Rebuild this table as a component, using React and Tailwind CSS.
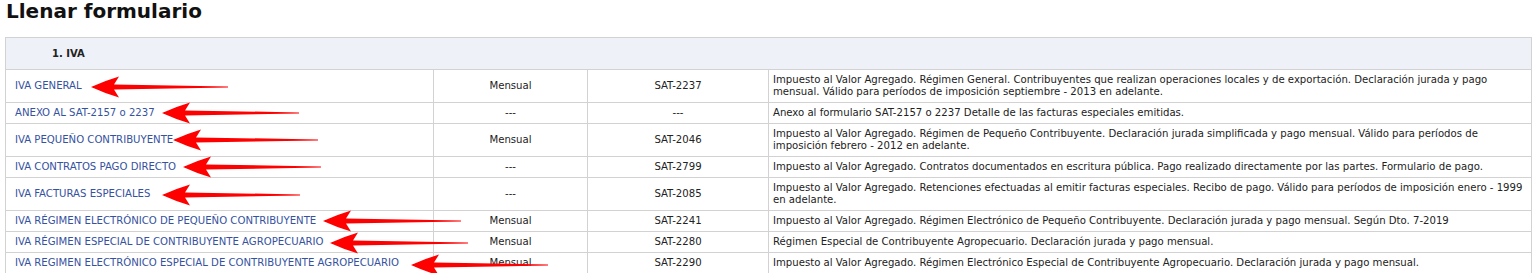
const ROWS = [
  {
    name: "IVA GENERAL",
    period: "Mensual",
    form: "SAT-2237",
    desc: "Impuesto al Valor Agregado. Régimen General. Contribuyentes que realizan operaciones locales y de exportación. Declaración jurada y pago\nmensual. Válido para períodos de imposición septiembre - 2013 en adelante.",
  },
  {
    name: "ANEXO AL SAT-2157 o 2237",
    period: "---",
    form: "---",
    desc: "Anexo al formulario SAT-2157 o 2237 Detalle de las facturas especiales emitidas.",
  },
  {
    name: "IVA PEQUEÑO CONTRIBUYENTE",
    period: "Mensual",
    form: "SAT-2046",
    desc: "Impuesto al Valor Agregado. Régimen de Pequeño Contribuyente. Declaración jurada simplificada y pago mensual. Válido para períodos de\nimposición febrero - 2012 en adelante.",
  },
  {
    name: "IVA CONTRATOS PAGO DIRECTO",
    period: "---",
    form: "SAT-2799",
    desc: "Impuesto al Valor Agregado. Contratos documentados en escritura pública. Pago realizado directamente por las partes. Formulario de pago.",
  },
  {
    name: "IVA FACTURAS ESPECIALES",
    period: "---",
    form: "SAT-2085",
    desc: "Impuesto al Valor Agregado. Retenciones efectuadas al emitir facturas especiales. Recibo de pago. Válido para períodos de imposición enero - 1999\nen adelante.",
  },
  {
    name: "IVA RÉGIMEN ELECTRÓNICO DE PEQUEÑO CONTRIBUYENTE",
    period: "Mensual",
    form: "SAT-2241",
    desc: "Impuesto al Valor Agregado. Régimen Electrónico de Pequeño Contribuyente. Declaración jurada y pago mensual. Según Dto. 7-2019",
  },
  {
    name: "IVA RÉGIMEN ESPECIAL DE CONTRIBUYENTE AGROPECUARIO",
    period: "Mensual",
    form: "SAT-2280",
    desc: "Régimen Especial de Contribuyente Agropecuario. Declaración jurada y pago mensual.",
  },
  {
    name: "IVA REGIMEN ELECTRÓNICO ESPECIAL DE CONTRIBUYENTE AGROPECUARIO",
    period: "Mensual",
    form: "SAT-2290",
    desc: "Impuesto al Valor Agregado. Régimen Electrónico Especial de Contribuyente Agropecuario. Declaración jurada y pago mensual.",
  },
];

// annotation arrows drawn over the screenshot: tip x / centre y / tail x
const ARROWS = [
  { tip: 91, y: 87, tail: 228, pos: "left-[91px] top-[76px]" },
  { tip: 162, y: 113, tail: 299, pos: "left-[162px] top-[102px]" },
  { tip: 173, y: 140, tail: 318, pos: "left-[173px] top-[129px]" },
  { tip: 183, y: 167, tail: 321, pos: "left-[183px] top-[156px]" },
  { tip: 162, y: 195, tail: 300, pos: "left-[162px] top-[184px]" },
  { tip: 323, y: 221, tail: 461, pos: "left-[323px] top-[210px]" },
  { tip: 330, y: 243, tail: 468, pos: "left-[330px] top-[232px]" },
  { tip: 411, y: 265, tail: 548, pos: "left-[411px] top-[254px]" },
];

function Arrow({ tip, tail, pos }) {
  const len = tail - tip;
  return (
    <svg
      className={`pointer-events-none absolute ${pos}`}
      width={len}
      height="22"
      viewBox={`0 0 ${len} 22`}
    >
      <path
        d={`M0 11 Q13 5 28 0.5 L23 8.4 L${len} 10.4 L${len} 11.4 L23 13.6 L28 21.5 Q13 17 0 11 Z`}
        fill="#ff0000"
      />
    </svg>
  );
}

export default function App() {
  return (
    <div className="relative h-[273px] w-[1536px] overflow-hidden bg-white">
      <h1 className="pl-[6px] font-['DejaVu_Sans',sans-serif] text-[20px] font-bold leading-[23px] text-[#111]">
        Llenar formulario
      </h1>

      <table className="ml-[5px] mt-[14px] w-[1527px] table-fixed border-collapse font-['DejaVu_Sans_Condensed','Liberation_Sans',sans-serif] text-[11.25px] leading-[12px] text-[#222]">
        <colgroup>
          <col className="w-[428px]" />
          <col className="w-[154px]" />
          <col className="w-[181px]" />
          <col />
        </colgroup>
        <thead>
          <tr className="bg-[#eef1f7]">
            <th
              colSpan={4}
              className="border border-[#d2d2d2] py-[9px] pl-[46px] text-left font-['DejaVu_Sans',sans-serif] text-[10px] leading-[13px] font-bold text-[#222]"
            >
              1. IVA
            </th>
          </tr>
        </thead>
        <tbody>
          {ROWS.map((r) => (
            <tr key={r.name}>
              <td className="border border-[#d2d2d2] py-1 pl-[9px] align-middle">
                <a href="#" className="text-[#3552a0]">
                  {r.name}
                </a>
              </td>
              <td className="border border-[#d2d2d2] py-1 text-center align-middle">{r.period}</td>
              <td className="border border-[#d2d2d2] py-1 text-center align-middle">{r.form}</td>
              <td className="whitespace-pre-line border border-[#d2d2d2] py-1 pl-[4px] pr-[2px] align-middle">
                {r.desc}
              </td>
            </tr>
          ))}
        </tbody>
      </table>

      {ARROWS.map((a) => (
        <Arrow key={a.y} {...a} />
      ))}
    </div>
  );
}
